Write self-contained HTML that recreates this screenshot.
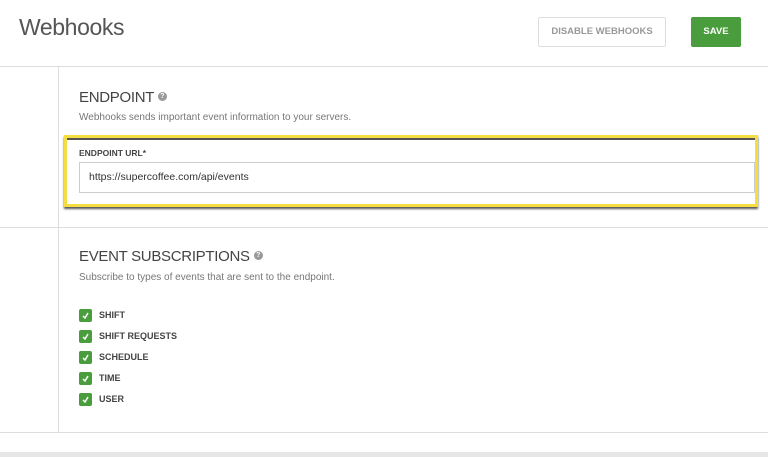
<!DOCTYPE html><html><head><style>
body{margin:0;width:768px;height:457px;background:#fff;font-family:"Liberation Sans",sans-serif;position:relative;overflow:hidden}
.a{position:absolute}
.cb{position:absolute;left:79px;width:13px;height:13px;background:#4a9d3c;border-radius:2px}
.cb svg{position:absolute;left:3px;top:3px}
.lb{position:absolute;left:99px;font-size:9px;font-weight:bold;color:#444}
.q{display:inline-block;width:9px;height:9px;border-radius:50%;background:#999;color:#fff;font-size:7px;font-weight:bold;text-align:center;line-height:9px;vertical-align:4px}
</style></head><body>
<div class="a" style="left:19px;top:14px;font-size:23px;color:#555;letter-spacing:-0.4px">Webhooks</div>
<div class="a" style="left:538px;top:17px;width:128px;height:30px;border:1px solid #ddd;border-radius:2px;box-sizing:border-box;font-size:9.5px;font-weight:bold;color:#999;text-align:center;line-height:28px">DISABLE WEBHOOKS</div>
<div class="a" style="left:691px;top:17px;width:50px;height:30px;background:#4a9d3c;border-radius:2px;font-size:9.5px;font-weight:bold;color:#fff;text-align:center;line-height:30px">SAVE</div>
<div class="a" style="left:0;top:66px;width:768px;height:1px;background:#ddd"></div>
<div class="a" style="left:58px;top:66px;width:1px;height:366px;background:#ddd"></div>
<div class="a" style="left:0;top:227px;width:768px;height:1px;background:#ddd"></div>
<div class="a" style="left:0;top:432px;width:768px;height:1px;background:#ddd"></div>
<div class="a" style="left:0;top:452px;width:768px;height:5px;background:#e6e6e6"></div>
<div class="a" style="left:79px;top:89px;font-size:15px;color:#444;letter-spacing:-0.3px">ENDPOINT <span class="q">?</span></div>
<div class="a" style="left:79px;top:112px;font-size:10px;color:#777">Webhooks sends important event information to your servers.</div>
<div class="a" style="left:64px;top:135px;width:694px;height:72px;border:3px solid #f5de44;box-sizing:border-box;box-shadow:inset 0 2px 0 #555,0 2px 2px #555"></div>
<div class="a" style="left:79px;top:148px;font-size:8.5px;font-weight:bold;color:#444">ENDPOINT URL*</div>
<div class="a" style="left:79px;top:162px;width:676px;height:31px;border:1px solid #ccc;box-sizing:border-box;font-size:10.5px;color:#333;line-height:29px;padding-left:9px;background:#fff">https://supercoffee.com/api/events</div>
<div class="a" style="left:79px;top:248px;font-size:15px;color:#444;letter-spacing:-0.3px">EVENT SUBSCRIPTIONS <span class="q">?</span></div>
<div class="a" style="left:79px;top:272px;font-size:10px;color:#777">Subscribe to types of events that are sent to the endpoint.</div>
<div class="cb" style="top:309px"><svg width="7" height="7"><path d="M1 4L3 6L6 1" stroke="#fff" stroke-width="1.5" fill="none"/></svg></div><div class="lb" style="top:310px">SHIFT</div>
<div class="cb" style="top:330px"><svg width="7" height="7"><path d="M1 4L3 6L6 1" stroke="#fff" stroke-width="1.5" fill="none"/></svg></div><div class="lb" style="top:331px">SHIFT REQUESTS</div>
<div class="cb" style="top:351px"><svg width="7" height="7"><path d="M1 4L3 6L6 1" stroke="#fff" stroke-width="1.5" fill="none"/></svg></div><div class="lb" style="top:352px">SCHEDULE</div>
<div class="cb" style="top:372px"><svg width="7" height="7"><path d="M1 4L3 6L6 1" stroke="#fff" stroke-width="1.5" fill="none"/></svg></div><div class="lb" style="top:373px">TIME</div>
<div class="cb" style="top:393px"><svg width="7" height="7"><path d="M1 4L3 6L6 1" stroke="#fff" stroke-width="1.5" fill="none"/></svg></div><div class="lb" style="top:394px">USER</div>
</body></html>
